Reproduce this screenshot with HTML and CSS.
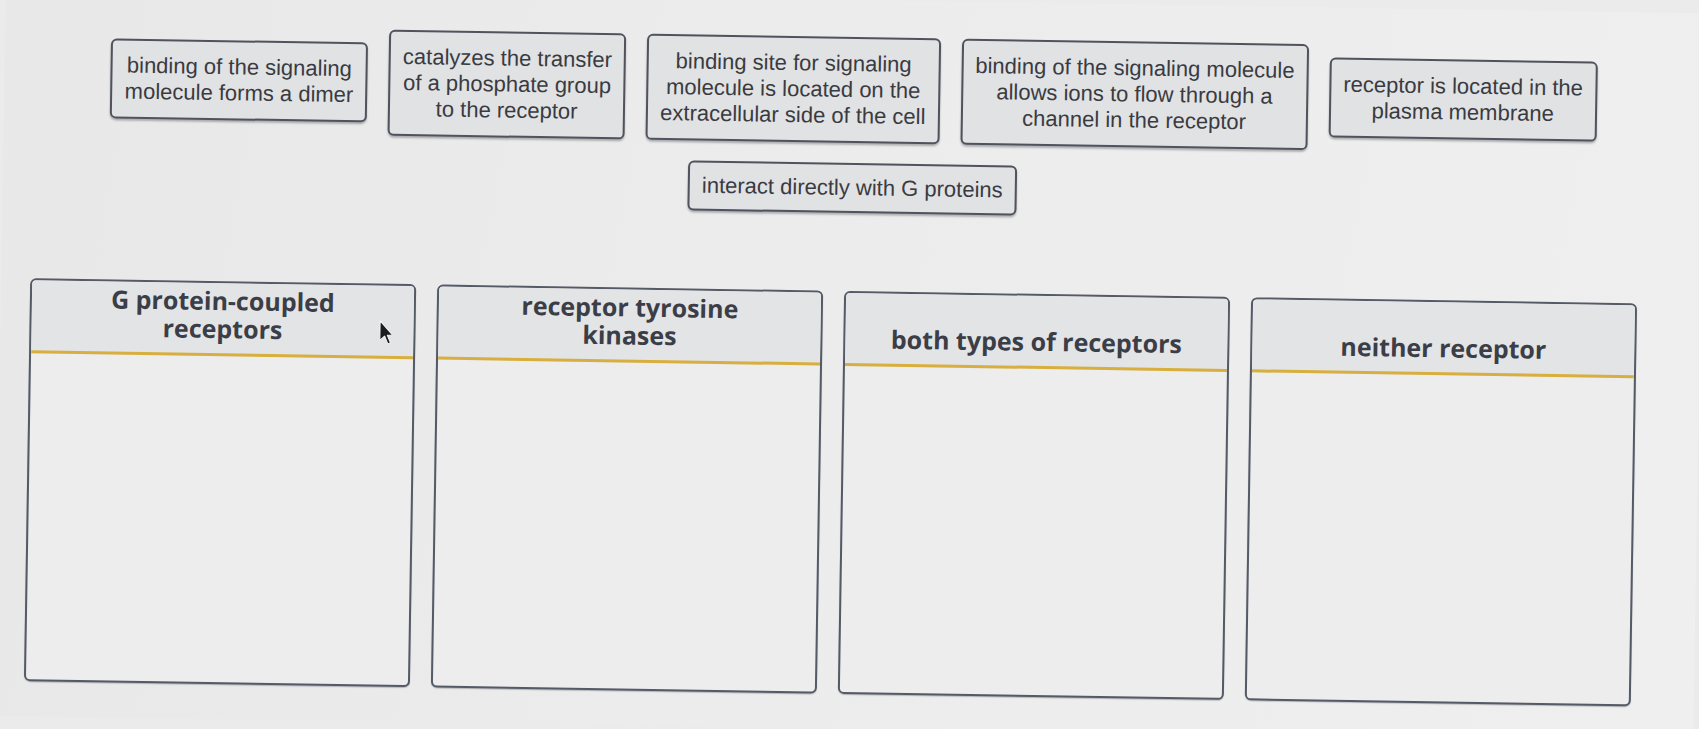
FILE: index.html
```html
<!DOCTYPE html>
<html lang="en">
<head>
<meta charset="utf-8">
<title>Receptor sorting</title>
<link rel="stylesheet" href="styles.css">
</head>
<body>
<div class="stage">
  <div class="bank">
    <div class="tile">binding of the signaling<br>molecule forms a dimer</div>
    <div class="tile">catalyzes the transfer<br>of a phosphate group<br>to the receptor</div>
    <div class="tile">binding site for signaling<br>molecule is located on the<br>extracellular side of the cell</div>
    <div class="tile">binding of the signaling molecule<br>allows ions to flow through a<br>channel in the receptor</div>
    <div class="tile">receptor is located in the<br>plasma membrane</div>
  </div>
  <div class="bank bank-extra">
    <div class="tile tile-single">interact directly with G proteins</div>
  </div>
  <div class="bins">
    <section class="bin">
      <header class="bin-head"><h2>G protein-coupled<br>receptors</h2></header>
      <div class="bin-body"></div>
    </section>
    <section class="bin">
      <header class="bin-head"><h2>receptor tyrosine<br>kinases</h2></header>
      <div class="bin-body"></div>
    </section>
    <section class="bin">
      <header class="bin-head"><h2>both types of receptors</h2></header>
      <div class="bin-body"></div>
    </section>
    <section class="bin">
      <header class="bin-head"><h2>neither receptor</h2></header>
      <div class="bin-body"></div>
    </section>
  </div>
  <svg class="pointer" width="16" height="26" viewBox="0 0 12 20" aria-hidden="true">
    <path d="M1 1 L1 16 L4.6 12.6 L7.2 18.6 L9.2 17.7 L6.7 11.9 L11 11.9 Z" fill="#1c1d22" stroke="#f2f2f2" stroke-width="0.8" stroke-linejoin="round"/>
  </svg>
</div>
</body>
</html>
```

FILE: styles.css
```css
html, body {
  margin: 0;
  padding: 0;
  background: #ebebeb;
  overflow: hidden;
}

.stage {
  position: relative;
  width: 1699px;
  height: 729px;
  box-sizing: border-box;
  padding-top: 37px;
  transform: rotate(0.9deg);
  transform-origin: 850px 365px;
  background: linear-gradient(100deg, #e8e8e8 0%, #ececec 45%, #efefef 100%);
}

/* answer tiles waiting to be dragged */
.bank {
  display: flex;
  justify-content: center;
  align-items: center;
  gap: 21px;
}

.bank-extra {
  margin-top: 20px;
}

.tile {
  background: #e1e2e4;
  border: 2px solid #50535e;
  border-radius: 6px;
  padding: 12px 12px;
  font-family: "Liberation Sans", Arial, sans-serif;
  font-size: 22px;
  line-height: 26px;
  color: #3a3b41;
  text-align: center;
  white-space: nowrap;
  box-shadow: 0 2px 2px rgba(60, 62, 72, 0.35);
}

.tile-single {
  padding-top: 10px;
  padding-bottom: 10px;
}

/* drop targets */
.bins {
  display: grid;
  grid-template-columns: repeat(4, 386px);
  gap: 21px;
  margin: 78px 0 0 29px;
}

.bin {
  height: 403px;
  box-sizing: border-box;
  border: 2px solid #555a67;
  border-radius: 6px;
  background: #ededed;
  display: flex;
  flex-direction: column;
  overflow: hidden;
  box-shadow: 0 1px 1px rgba(60, 62, 72, 0.3);
}

.bin-head {
  height: 73px;
  box-sizing: border-box;
  border-bottom: 3px solid #d8af3e;
  background: #e3e4e6;
  display: flex;
  align-items: flex-end;
  justify-content: center;
  padding: 0 12px 11px;
}

.bin-head h2 {
  margin: 0;
  font-family: "Open Sans", "DejaVu Sans", sans-serif;
  font-weight: 700;
  font-size: 25px;
  line-height: 28px;
  color: #3b3e46;
  text-align: center;
}

.bin-body {
  flex: 1;
}

.pointer {
  position: absolute;
  left: 378px;
  top: 327px;
}
```
